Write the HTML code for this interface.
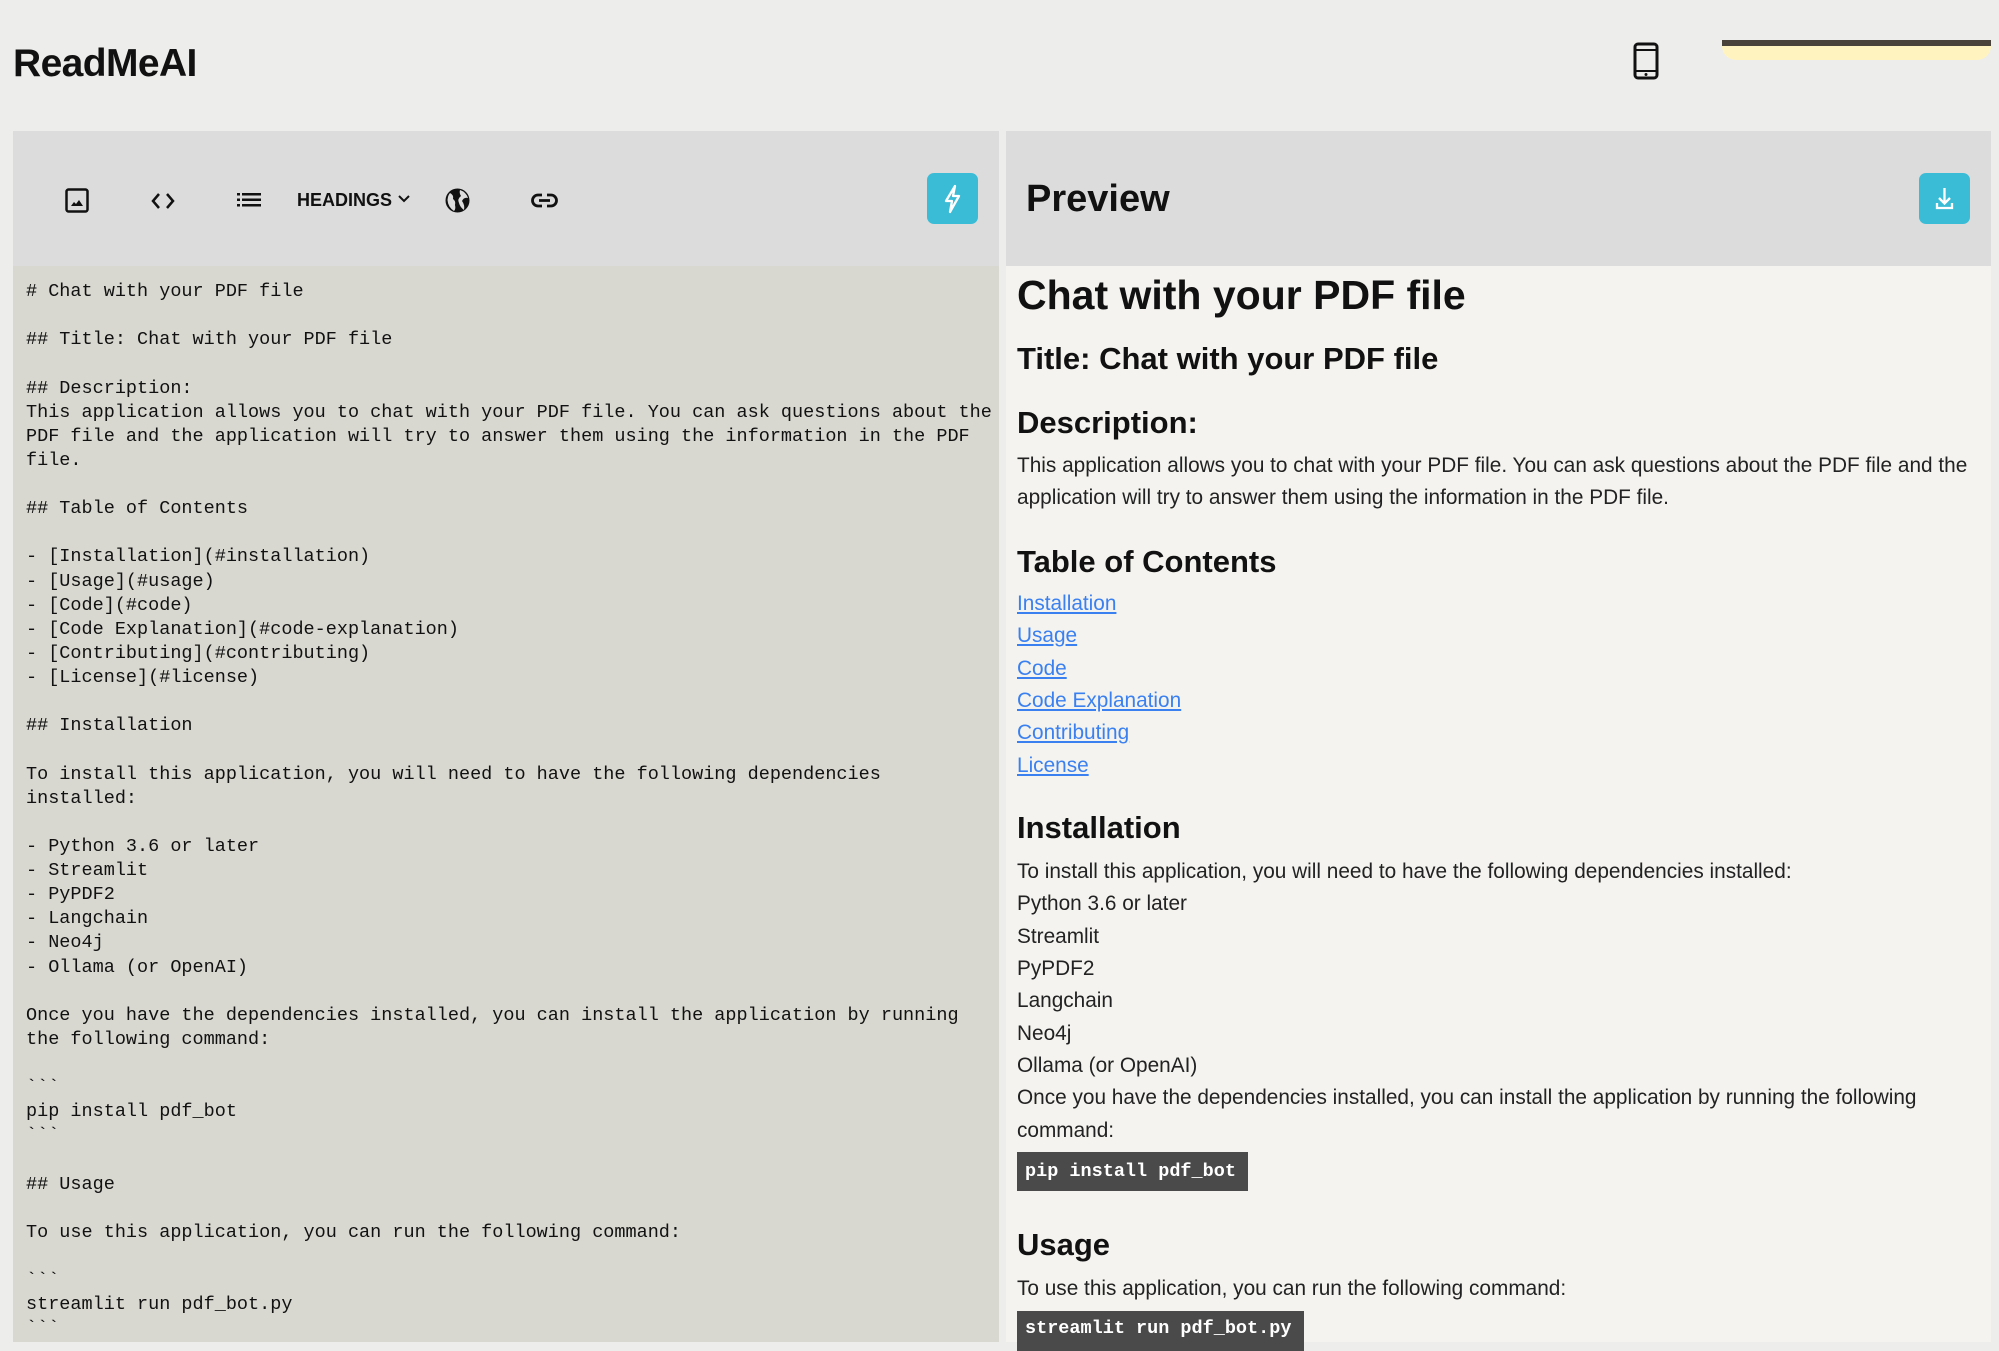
<!DOCTYPE html>
<html><head><meta charset="utf-8"><style>
*{margin:0;padding:0;box-sizing:border-box}
body{width:1999px;height:1342px;background:#ededeb;position:relative;overflow:hidden;font-family:"Liberation Sans",sans-serif;color:#111}
.abs{position:absolute}
#logo{left:13px;top:40px;font-size:39px;font-weight:bold;letter-spacing:-0.6px;line-height:48px}
#lp{left:13px;top:131px;width:986px;height:1211px;background:#d8d7d0}
#rp{left:1006px;top:131px;width:985px;height:1211px;background:#f4f3ef}
.tb{position:absolute;left:0;top:0;width:100%;height:135px;background:#dcdcdc}
pre{position:absolute;left:26px;top:280px;font-family:"Liberation Mono",monospace;font-size:18.5px;line-height:24.12px;color:#111}
.btn{position:absolute;width:51px;height:51px;border-radius:7px;background:#3bbcd6}
.r{position:absolute;left:1017px;white-space:nowrap}
.h1{font-size:41px;font-weight:bold;height:50px;line-height:50px}
.h2{font-size:31px;font-weight:bold;height:36px;line-height:36px}
.p{font-size:20.8px;height:30px;line-height:30px;color:#222}
.a{font-size:20.8px;height:30px;line-height:30px;color:#3a80f0;text-decoration:underline}
.code{background:#4a4a4a;color:#fff;font-family:"Liberation Mono",monospace;font-weight:bold;font-size:18.5px;padding:0 8px}
</style></head><body>
<div id="logo" class="abs">ReadMeAI</div>
<svg class="abs" style="left:1633px;top:42px" width="26" height="38" viewBox="0 0 26 38"><rect x="2" y="2" width="22" height="34" rx="3" fill="none" stroke="#111" stroke-width="3"/><line x1="3" y1="8" x2="23" y2="8" stroke="#111" stroke-width="2"/><line x1="3" y1="29" x2="23" y2="29" stroke="#111" stroke-width="2"/><circle cx="13" cy="32.5" r="1.5" fill="#111"/></svg>
<div class="abs" style="left:1722px;top:40px;width:269px;height:20px;background:#fff4c0;border-radius:0 0 14px 14px;border-top:6px solid #48423a"></div>

<div id="lp" class="abs">
 <div class="tb">
  <svg class="abs" style="left:52px;top:57px" width="24" height="25" viewBox="0 0 24 25"><rect x="1.5" y="1.5" width="21" height="22" rx="2" fill="none" stroke="#111" stroke-width="2.5"/><path d="M6 18 L9 14 L11 16 L14 12 L18 18Z" fill="#111"/></svg>
  <svg class="abs" style="left:137px;top:60px" width="26" height="20" viewBox="0 0 26 20"><path d="M9 3 L3 10 L9 17 M17 3 L23 10 L17 17" fill="none" stroke="#111" stroke-width="2.5"/></svg>
  <svg class="abs" style="left:224px;top:60px" width="24" height="18" viewBox="0 0 24 18"><rect x="0" y="2" width="3" height="2.5" fill="#111"/><rect x="0" y="7.5" width="3" height="2.5" fill="#111"/><rect x="0" y="13" width="3" height="2.5" fill="#111"/><rect x="5" y="2" width="19" height="2.5" fill="#111"/><rect x="5" y="7.5" width="19" height="2.5" fill="#111"/><rect x="5" y="13" width="19" height="2.5" fill="#111"/></svg>
  <div class="abs" style="left:284px;top:57px;font-size:18px;font-weight:bold;line-height:24px">HEADINGS</div>
  <svg class="abs" style="left:385px;top:62px" width="12" height="10" viewBox="0 0 12 10"><path d="M1 3 L6 8 L11 3" fill="none" stroke="#111" stroke-width="2"/></svg>
  <svg class="abs" style="left:431px;top:56px" width="27" height="27" viewBox="0 0 27 27"><circle cx="13.5" cy="13.5" r="12" fill="#111"/><path d="M6 6 Q10 8 9 12 Q12 14 11 18 Q12 22 10 24 Q4 20 3.5 13 Q4 8 6 6Z M16 3 Q22 5 24 11 Q20 10 18 14 Q21 18 20 23 Q16 20 15 16 Q13 12 17 9 Q15 6 16 3Z" fill="#dcdcdc"/></svg>
  <svg class="abs" style="left:518px;top:61px" width="27" height="17" viewBox="0 0 27 17"><path d="M11 3 H7 A5.5 5.5 0 0 0 7 14 H11 M16 3 H20 A5.5 5.5 0 0 1 20 14 H16 M8 8.5 H19" fill="none" stroke="#111" stroke-width="2.8"/></svg>
  <div class="btn" style="left:914px;top:42px"><svg width="51" height="51" viewBox="0 0 51 51"><path d="M28 13 L19 28 H25 L23 39 L32 23 H26 Z" fill="none" stroke="#fff" stroke-width="2.3" stroke-linejoin="round"/></svg></div>
 </div>
</div>
<pre># Chat with your PDF file

## Title: Chat with your PDF file

## Description:
This application allows you to chat with your PDF file. You can ask questions about the
PDF file and the application will try to answer them using the information in the PDF
file.

## Table of Contents

- [Installation](#installation)
- [Usage](#usage)
- [Code](#code)
- [Code Explanation](#code-explanation)
- [Contributing](#contributing)
- [License](#license)

## Installation

To install this application, you will need to have the following dependencies
installed:

- Python 3.6 or later
- Streamlit
- PyPDF2
- Langchain
- Neo4j
- Ollama (or OpenAI)

Once you have the dependencies installed, you can install the application by running
the following command:

&#96;&#96;&#96;
pip install pdf_bot
&#96;&#96;&#96;

## Usage

To use this application, you can run the following command:

&#96;&#96;&#96;
streamlit run pdf_bot.py
&#96;&#96;&#96;</pre>

<div id="rp" class="abs">
 <div class="tb">
  <div class="abs" style="left:20px;top:45px;font-size:38px;font-weight:bold;line-height:46px">Preview</div>
  <div class="btn" style="left:913px;top:42px"><svg width="51" height="51" viewBox="0 0 51 51"><path d="M25.5 15 V30 M20 25 L25.5 30.5 L31 25 M18 30 V35 H33 V30" fill="none" stroke="#fff" stroke-width="2.3"/></svg></div>
 </div>
</div>
<div class="r h1" style="top:270px">Chat with your PDF file</div>
<div class="r h2" style="top:341px">Title: Chat with your PDF file</div>
<div class="r h2" style="top:405px">Description:</div>
<div class="r p" style="top:451px">This application allows you to chat with your PDF file. You can ask questions about the PDF file and the</div>
<div class="r p" style="top:483px">application will try to answer them using the information in the PDF file.</div>
<div class="r h2" style="top:544px">Table of Contents</div>
<div class="r a" style="top:589px">Installation</div>
<div class="r a" style="top:621px">Usage</div>
<div class="r a" style="top:654px">Code</div>
<div class="r a" style="top:686px">Code Explanation</div>
<div class="r a" style="top:718px">Contributing</div>
<div class="r a" style="top:751px">License</div>
<div class="r h2" style="top:810px">Installation</div>
<div class="r p" style="top:857px">To install this application, you will need to have the following dependencies installed:</div>
<div class="r p" style="top:889px">Python 3.6 or later</div>
<div class="r p" style="top:922px">Streamlit</div>
<div class="r p" style="top:954px">PyPDF2</div>
<div class="r p" style="top:986px">Langchain</div>
<div class="r p" style="top:1019px">Neo4j</div>
<div class="r p" style="top:1051px">Ollama (or OpenAI)</div>
<div class="r p" style="top:1083px">Once you have the dependencies installed, you can install the application by running the following</div>
<div class="r p" style="top:1116px">command:</div>
<div class="r code" style="top:1152px;height:39px;line-height:39px;width:231px">pip install pdf_bot</div>
<div class="r h2" style="top:1227px">Usage</div>
<div class="r p" style="top:1274px">To use this application, you can run the following command:</div>
<div class="r code" style="top:1311px;height:40px;line-height:36px;width:287px">streamlit run pdf_bot.py</div>
</body></html>
